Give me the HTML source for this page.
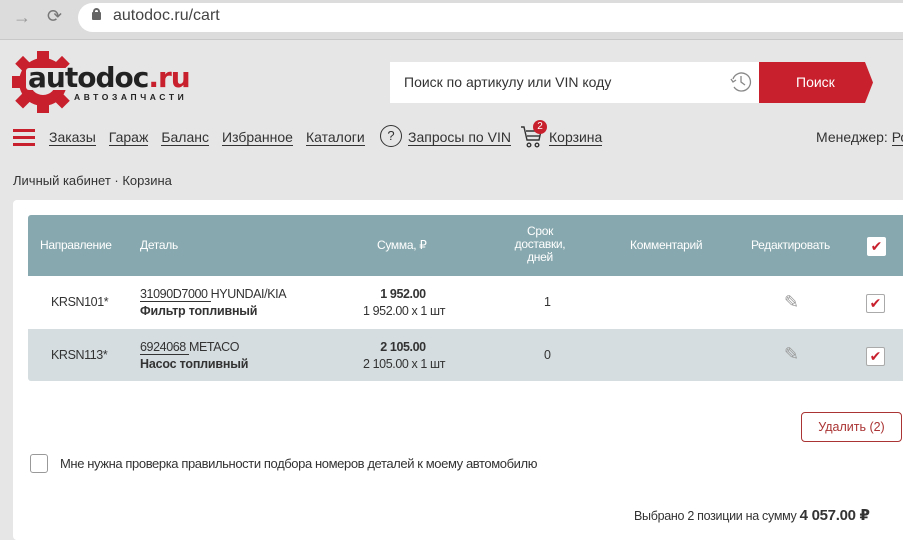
<!DOCTYPE html>
<html><head><meta charset="utf-8"><style>
*{margin:0;padding:0;box-sizing:border-box}
body{width:903px;height:530px;overflow:hidden;background:#e6e6e6;font-family:"Liberation Sans","DejaVu Sans",sans-serif;color:#333;position:relative}
.abs{position:absolute}
.chrome{left:0;top:0;width:903px;height:40px;background:#dcdcdc;border-bottom:1px solid #c8c8c8}
.url{left:78px;top:3px;width:840px;height:29px;background:#fff;border-radius:15px}
.nav a{color:#333;text-decoration:none;border-bottom:1px solid #333;font-size:14px}
.narrow{font-size:12.5px;letter-spacing:-0.4px}
.hdr{color:#fff;font-size:12px;letter-spacing:-0.3px;text-align:center}
.cb{width:19px;height:19px;background:#fff;border:1px solid #aaa;border-radius:2px;color:#c8202d;font-size:14px;line-height:17px;text-align:center;font-weight:bold}
</style></head><body>
<div class="abs chrome"></div>
<div class="abs" style="left:13px;top:7px;font-size:18px;color:#999">→</div>
<div class="abs" style="left:47px;top:6px;font-size:18px;color:#777">⟳</div>
<div class="abs url"></div>
<div class="abs" style="left:92px;top:12px;width:9px;height:8px;background:#666;border-radius:1px"></div>
<div class="abs" style="left:93px;top:8px;width:7px;height:7px;border:2px solid #666;border-radius:4px 4px 0 0"></div>
<div class="abs" style="left:113px;top:7px;font-size:16px;color:#444">autodoc.ru/cart</div>

<!-- logo -->
<svg class="abs" style="left:12px;top:50px" width="62" height="64" viewBox="0 0 62 64">
<g fill="#c8202d"><circle cx="31" cy="32" r="24"/>
<rect x="25" y="1" width="12" height="12"/><rect x="25" y="51" width="12" height="12"/>
<rect x="0" y="26" width="12" height="12"/><rect x="50" y="26" width="12" height="12"/>
<rect x="6" y="8" width="11" height="11" transform="rotate(45 11 13)"/><rect x="45" y="8" width="11" height="11" transform="rotate(45 50 13)"/>
<rect x="6" y="45" width="11" height="11" transform="rotate(45 11 50)"/><rect x="45" y="45" width="11" height="11" transform="rotate(45 50 50)"/></g>
<circle cx="31" cy="32" r="13" fill="#e6e6e6"/></svg>
<div class="abs" style="left:26px;top:68px;width:136px;height:22px;background:#e6e6e6;border-radius:3px"></div>
<div class="abs" style="left:28px;top:62px;font-size:28px;font-weight:900;color:#222;letter-spacing:-1px;font-family:'DejaVu Sans',sans-serif;line-height:32px">autodoc<span style="color:#c8202d">.ru</span></div>
<div class="abs" style="left:74px;top:92px;font-size:8.5px;font-weight:bold;letter-spacing:3.6px;color:#222">АВТОЗАПЧАСТИ</div>

<!-- search -->
<div class="abs" style="left:390px;top:62px;width:370px;height:41px;background:#fff"></div>
<div class="abs" style="left:404px;top:74px;font-size:14px;color:#333">Поиск по артикулу или VIN коду</div>
<svg class="abs" style="left:729px;top:70px" width="24" height="24" viewBox="0 0 24 24" fill="none" stroke="#888" stroke-width="1.3"><path d="M4 9A9 9 0 1 1 5 17"/><path d="M12 6v6l4 3"/><path d="M2 9l2 3 3-2"/></svg>
<svg class="abs" style="left:759px;top:62px" width="116" height="41"><path d="M0 0H106L114 20.5L106 41H0Z" fill="#c8202d"/></svg>
<div class="abs" style="left:796px;top:74px;font-size:14px;color:#fff">Поиск</div>

<!-- nav -->
<div class="abs" style="left:13px;top:129px;width:22px;height:3px;background:#c8202d;box-shadow:0 7px 0 #c8202d,0 14px 0 #c8202d"></div>
<div class="abs nav" style="left:49px;top:129px;white-space:nowrap">
<a>Заказы</a><a style="margin-left:13px">Гараж</a><a style="margin-left:13px">Баланс</a><a style="margin-left:13px">Избранное</a><a style="margin-left:13px">Каталоги</a></div>
<div class="abs" style="left:380px;top:125px;width:22px;height:22px;border:1.5px solid #333;border-radius:50%;font-size:13px;text-align:center;line-height:19px">?</div>
<div class="abs nav" style="left:408px;top:129px"><a>Запросы по VIN</a></div>
<svg class="abs" style="left:520px;top:125px" width="24" height="24" viewBox="0 0 24 24" fill="none" stroke="#333" stroke-width="1.4"><path d="M1 2h3l3 13h12l2-9H6"/><path d="M7 11h13"/><circle cx="9" cy="20" r="1.8"/><circle cx="17" cy="20" r="1.8"/></svg>
<div class="abs" style="left:533px;top:120px;width:14px;height:14px;border-radius:50%;background:#c8202d;color:#fff;font-size:10px;text-align:center;line-height:14px">2</div>
<div class="abs nav" style="left:549px;top:129px"><a>Корзина</a></div>
<div class="abs" style="left:816px;top:129px;font-size:14px;color:#333;white-space:nowrap">Менеджер: <span style="border-bottom:1px solid #333">Ро</span></div>

<div class="abs" style="left:13px;top:173px;font-size:13px;color:#333">Личный кабинет · Корзина</div>

<!-- panel -->
<div class="abs" style="left:13px;top:200px;width:900px;height:340px;background:#fff;border-radius:4px"></div>
<div class="abs" style="left:28px;top:215px;width:880px;height:61px;background:#87a8ae;border-radius:3px 0 0 0"></div>
<div class="abs hdr" style="left:40px;top:238px">Направление</div>
<div class="abs hdr" style="left:140px;top:238px">Деталь</div>
<div class="abs hdr" style="left:377px;top:238px">Сумма, ₽</div>
<div class="abs hdr" style="left:510px;top:225px;width:60px;line-height:13px">Срок доставки, дней</div>
<div class="abs hdr" style="left:630px;top:238px">Комментарий</div>
<div class="abs hdr" style="left:751px;top:238px">Редактировать</div>
<div class="abs cb" style="left:867px;top:237px;border-color:#fff">✔</div>

<div class="abs" style="left:28px;top:329px;width:880px;height:52px;background:#d5dde0;border-radius:0 0 0 3px"></div>

<div class="abs narrow" style="left:51px;top:295px">KRSN101*</div>
<div class="abs narrow" style="left:140px;top:287px"><span style="border-bottom:1px solid #333">31090D7000 </span>HYUNDAI/KIA</div>
<div class="abs narrow" style="left:140px;top:304px;font-weight:bold;letter-spacing:-0.2px">Фильтр топливный</div>
<div class="abs narrow" style="left:360px;top:287px;width:86px;text-align:center;font-weight:bold">1 952.00</div>
<div class="abs narrow" style="left:356px;top:304px;width:96px;text-align:center">1 952.00 x 1 шт</div>
<div class="abs narrow" style="left:544px;top:295px">1</div>
<div class="abs" style="left:784px;top:292px;font-size:18px;color:#999">✎</div>
<div class="abs cb" style="left:866px;top:294px">✔</div>

<div class="abs narrow" style="left:51px;top:348px">KRSN113*</div>
<div class="abs narrow" style="left:140px;top:340px"><span style="border-bottom:1px solid #333">6924068 </span>METACO</div>
<div class="abs narrow" style="left:140px;top:357px;font-weight:bold;letter-spacing:-0.2px">Насос топливный</div>
<div class="abs narrow" style="left:360px;top:340px;width:86px;text-align:center;font-weight:bold">2 105.00</div>
<div class="abs narrow" style="left:356px;top:357px;width:96px;text-align:center">2 105.00 x 1 шт</div>
<div class="abs narrow" style="left:544px;top:348px">0</div>
<div class="abs" style="left:784px;top:344px;font-size:18px;color:#999">✎</div>
<div class="abs cb" style="left:866px;top:347px">✔</div>

<div class="abs" style="left:801px;top:412px;width:101px;height:30px;border:1px solid #a33;border-radius:4px;color:#a33;font-size:12.5px;text-align:center;line-height:28px">Удалить (2)</div>
<div class="abs" style="left:30px;top:454px;width:18px;height:19px;border:1px solid #999;border-radius:3px;background:#fff"></div>
<div class="abs narrow" style="left:60px;top:456px;font-size:13px">Мне нужна проверка правильности подбора номеров деталей к моему автомобилю</div>
<div class="abs" style="left:634px;top:506px;font-size:12.5px;letter-spacing:-0.3px;white-space:nowrap">Выбрано 2 позиции на сумму <b style="font-size:15px">4 057.00 ₽</b></div>
</body></html>
